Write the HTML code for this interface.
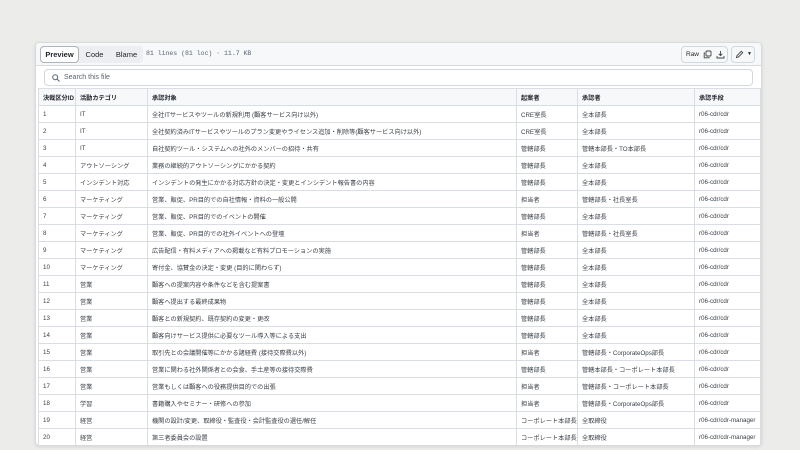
<!DOCTYPE html>
<html><head><meta charset="utf-8"><style>
*{box-sizing:border-box;margin:0;padding:0}
body{width:800px;height:450px;overflow:hidden;background:#ececea;font-family:"Liberation Sans","Noto Sans CJK JP",sans-serif;color:#1f2328;position:relative}
.panel{position:absolute;left:35px;top:42px;width:727px;height:404px;background:#fff;border:1px solid #d8dadd;border-radius:4px;overflow:hidden;box-shadow:0 1px 3px rgba(0,0,0,.1)}
.bar{height:23px;background:#f6f8fa;border-bottom:1px solid #d8dadd;position:relative}
.tabs{position:absolute;left:4px;top:3px;height:17px;width:103px;background:#eceef1;border-radius:4px;font-size:7.5px}
.tab{position:absolute;top:0;line-height:17px;text-align:center}
.tab.on{background:#fff;border:1px solid #aeb4bb;border-radius:4px;font-weight:bold;line-height:15px}
.meta{position:absolute;left:110px;top:7px;font-family:"Liberation Mono",monospace;font-size:6.5px;color:#59636e}
.bg{position:absolute;top:3px;height:17px;border:1px solid #d1d9e0;border-radius:4px;background:#f6f8fa;font-size:6.5px}
.search{position:absolute;left:8px;top:26px;width:709px;height:17px;border:1px solid #d1d9e0;border-radius:4px;font-size:7px;color:#59636e;padding-left:19px;line-height:15px}
table{position:absolute;left:2px;top:45px;width:722px;border-collapse:collapse;font-size:6.2px;table-layout:fixed}
td,th{border:1px solid #d8dee4;height:17px;padding:0 4px;text-align:left;white-space:nowrap;overflow:hidden;color:#3b4047;font-weight:normal}
th{background:#f6f8fa;font-weight:bold;color:#1f2328}
</style></head><body>
<div class="panel">
<div class="bar">
<div class="tabs"><div class="tab on" style="left:0;width:39px">Preview</div><div class="tab" style="left:39px;width:31px">Code</div><div class="tab" style="left:70px;width:33px">Blame</div></div>
<div class="meta">81 lines (81 loc) · 11.7 KB</div>
<div class="bg" style="left:645px;width:47px">
<span style="position:absolute;left:4px;top:4px">Raw</span>
<svg style="position:absolute;left:21px;top:3px" width="9" height="9" viewBox="0 0 9 9" fill="none" stroke="#444" stroke-width="0.9"><rect x="3" y="1" width="5" height="5" rx="0.8"/><path d="M2 3H1.2v4.8H6V7"/></svg>
<svg style="position:absolute;left:34px;top:3px" width="9" height="9" viewBox="0 0 9 9" fill="none" stroke="#444" stroke-width="0.9"><path d="M4.5 1v4.5M2.7 3.8l1.8 1.8 1.8-1.8M1 6v2h7V6"/></svg>
</div>
<div class="bg" style="left:695px;width:24px">
<svg style="position:absolute;left:3px;top:3px" width="9" height="9" viewBox="0 0 9 9" fill="none" stroke="#444" stroke-width="0.9"><path d="M1.5 7.5l.4-1.8L6.3 1.3l1.4 1.4-4.4 4.4z"/></svg>
<span style="position:absolute;left:15px;top:4px;font-size:5px">▼</span>
</div>
</div>
<div class="search"><svg style="position:absolute;left:7px;top:4px" width="8" height="8" viewBox="0 0 8 8"><circle cx="3.2" cy="3.2" r="2.5" fill="none" stroke="#59636e" stroke-width="1"/><path d="M5 5L7.5 7.5" stroke="#59636e" stroke-width="1"/></svg>Search this file</div>
<table>
<colgroup><col style="width:37px"><col style="width:72px"><col style="width:369px"><col style="width:61px"><col style="width:117px"><col style="width:66px"></colgroup>
<tr><th>決裁区分ID</th><th>活動カテゴリ</th><th>承認対象</th><th>起案者</th><th>承認者</th><th>承認手段</th></tr>
<tr><td>1</td><td>IT</td><td>全社ITサービスやツールの新規利用 (顧客サービス向け以外)</td><td>CRE室長</td><td>全本部長</td><td>r06-cdr/cdr</td></tr>
<tr><td>2</td><td>IT</td><td>全社契約済みITサービスやツールのプラン変更やライセンス追加・削除等(顧客サービス向け以外)</td><td>CRE室長</td><td>全本部長</td><td>r06-cdr/cdr</td></tr>
<tr><td>3</td><td>IT</td><td>自社契約ツール・システムへの社外のメンバーの招待・共有</td><td>管轄部長</td><td>管轄本部長・TO本部長</td><td>r06-cdr/cdr</td></tr>
<tr><td>4</td><td>アウトソーシング</td><td>業務の継続的アウトソーシングにかかる契約</td><td>管轄部長</td><td>全本部長</td><td>r06-cdr/cdr</td></tr>
<tr><td>5</td><td>インシデント対応</td><td>インシデントの発生にかかる対応方針の決定・変更とインシデント報告書の内容</td><td>管轄部長</td><td>全本部長</td><td>r06-cdr/cdr</td></tr>
<tr><td>6</td><td>マーケティング</td><td>営業、販促、PR目的での自社情報・資料の一般公開</td><td>担当者</td><td>管轄部長・社長室長</td><td>r06-cdr/cdr</td></tr>
<tr><td>7</td><td>マーケティング</td><td>営業、販促、PR目的でのイベントの開催</td><td>管轄部長</td><td>全本部長</td><td>r06-cdr/cdr</td></tr>
<tr><td>8</td><td>マーケティング</td><td>営業、販促、PR目的での社外イベントへの登壇</td><td>担当者</td><td>管轄部長・社長室長</td><td>r06-cdr/cdr</td></tr>
<tr><td>9</td><td>マーケティング</td><td>広告配信・有料メディアへの掲載など有料プロモーションの実施</td><td>管轄部長</td><td>全本部長</td><td>r06-cdr/cdr</td></tr>
<tr><td>10</td><td>マーケティング</td><td>寄付金、協賛金の決定・変更 (目的に関わらず)</td><td>管轄部長</td><td>全本部長</td><td>r06-cdr/cdr</td></tr>
<tr><td>11</td><td>営業</td><td>顧客への提案内容や条件などを含む提案書</td><td>管轄部長</td><td>全本部長</td><td>r06-cdr/cdr</td></tr>
<tr><td>12</td><td>営業</td><td>顧客へ提出する最終成果物</td><td>管轄部長</td><td>全本部長</td><td>r06-cdr/cdr</td></tr>
<tr><td>13</td><td>営業</td><td>顧客との新規契約、既存契約の変更・更改</td><td>管轄部長</td><td>全本部長</td><td>r06-cdr/cdr</td></tr>
<tr><td>14</td><td>営業</td><td>顧客向けサービス提供に必要なツール導入等による支出</td><td>管轄部長</td><td>全本部長</td><td>r06-cdr/cdr</td></tr>
<tr><td>15</td><td>営業</td><td>取引先との会議開催等にかかる諸経費 (接待交際費以外)</td><td>担当者</td><td>管轄部長・CorporateOps部長</td><td>r06-cdr/cdr</td></tr>
<tr><td>16</td><td>営業</td><td>営業に関わる社外関係者との会食、手土産等の接待交際費</td><td>管轄部長</td><td>管轄本部長・コーポレート本部長</td><td>r06-cdr/cdr</td></tr>
<tr><td>17</td><td>営業</td><td>営業もしくは顧客への役務提供目的での出張</td><td>担当者</td><td>管轄部長・コーポレート本部長</td><td>r06-cdr/cdr</td></tr>
<tr><td>18</td><td>学習</td><td>書籍購入やセミナー・研修への参加</td><td>担当者</td><td>管轄部長・CorporateOps部長</td><td>r06-cdr/cdr</td></tr>
<tr><td>19</td><td>経営</td><td>機関の設計/変更、取締役・監査役・会計監査役の選任/解任</td><td>コーポレート本部長</td><td>全取締役</td><td>r06-cdr/cdr-manager</td></tr>
<tr><td>20</td><td>経営</td><td>第三者委員会の設置</td><td>コーポレート本部長</td><td>全取締役</td><td>r06-cdr/cdr-manager</td></tr>
<tr><td>21</td><td>経営</td><td></td><td></td><td></td><td></td></tr>
</table>
</div>
</body></html>
